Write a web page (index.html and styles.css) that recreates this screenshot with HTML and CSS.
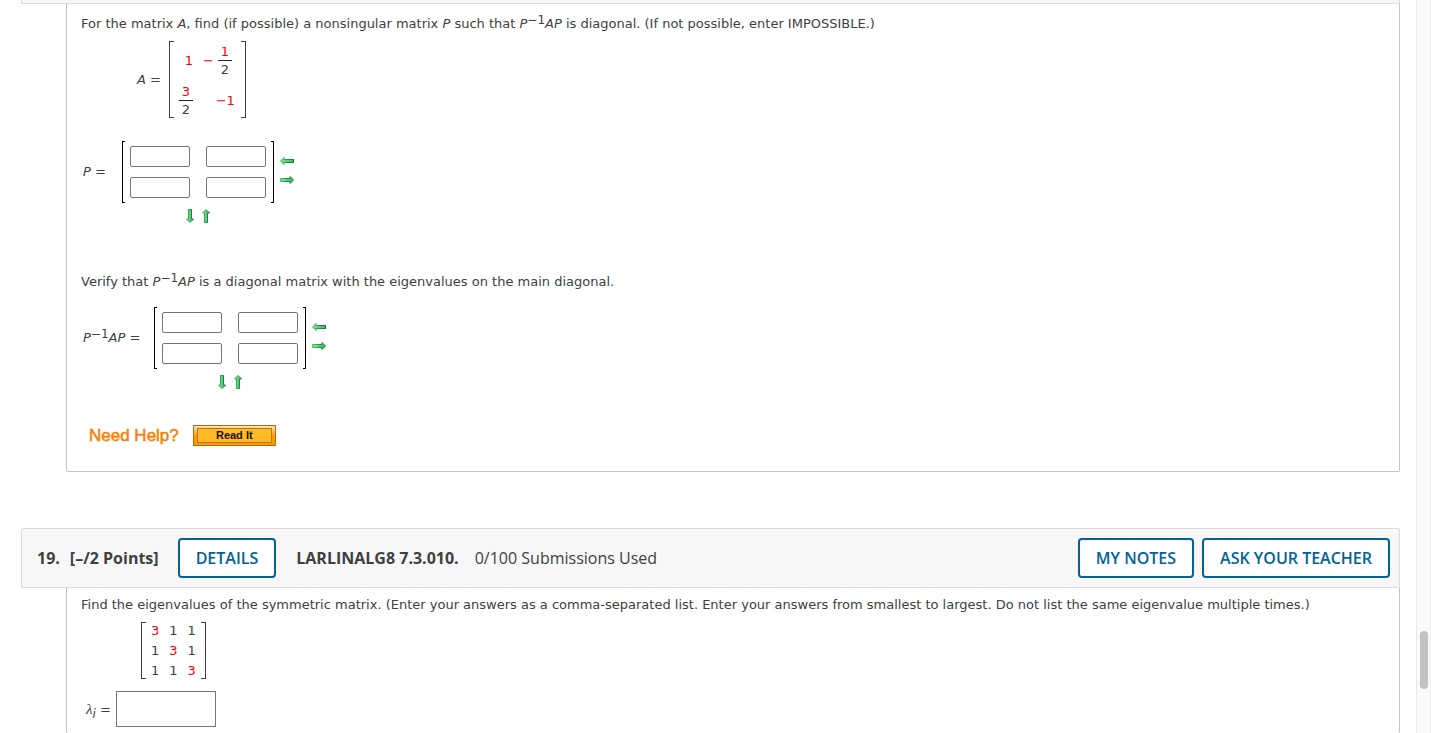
FILE: index.html
```
<!DOCTYPE html>
<html lang="en">
<head>
    <meta charset="UTF-8">
    <meta name="viewport" content="width=device-width, initial-scale=1.0">
    <title>Homework - Diagonalization</title>
    <link rel="stylesheet" href="styles.css">
</head>
<body>
    <!-- shared arrows, one for each direction -->
    <svg class="defs" width="0" height="0" aria-hidden="true">
        <defs>
            <linearGradient id="green" x1="0" y1="0" x2="1" y2="0">
                <stop offset="0" stop-color="#8fe295"/>
                <stop offset="1" stop-color="#3fb564"/>
            </linearGradient>
            <linearGradient id="edge" x1="0" y1="0" x2="1" y2="0">
                <stop offset="0" stop-color="#3fc468"/>
                <stop offset="1" stop-color="#00702c"/>
            </linearGradient>
            <symbol id="arrow-left" viewBox="0 0 14 8">
                <path d="M.5 4 4 .5V2.500H13.500V5.500H4V7.500Z" fill="url(#green)" stroke="url(#edge)"/>
            </symbol>
            <symbol id="arrow-right" viewBox="0 0 14 8">
                <path d="M13.500 4 10 .5V2.500H.5V5.500H10V7.500Z" fill="url(#green)" stroke="url(#edge)"/>
            </symbol>
            <symbol id="arrow-down" viewBox="0 0 8 14">
                <path d="M4 13.500.5 10H2.500V.5H5.500V10H7.500Z" fill="url(#green)" stroke="url(#edge)"/>
            </symbol>
            <symbol id="arrow-up" viewBox="0 0 8 14">
                <path d="M4 .5.5 4H2.500V13.500H5.500V4H7.500Z" fill="url(#green)" stroke="url(#edge)"/>
            </symbol>
        </defs>
    </svg>

    <main>
        <div class="prev-header"></div>
        <section class="question">
            <p>For the matrix <i>A</i>, find (if possible) a nonsingular matrix <i>P</i> such that <i>P</i><sup>−1</sup><i>AP</i> is diagonal. (If not possible, enter IMPOSSIBLE.)</p>

            <div class="equation given">
                <span><i>A</i> =</span>
                <div class="matrix">
                    <span class="bracket left"></span>
                    <div class="cells fractions">
                        <span class="red">1</span>
                        <span class="signed"><span class="red">−</span><span class="frac"><span class="red">1</span><span class="den">2</span></span></span>
                        <span class="frac"><span class="red">3</span><span class="den">2</span></span>
                        <span class="red">−1</span>
                    </div>
                    <span class="bracket right"></span>
                </div>
            </div>

            <div class="equation answer">
                <span class="label"><i>P</i> =</span>
                <div class="matrix-input">
                    <div class="matrix">
                        <span class="bracket left"></span>
                        <div class="cells inputs">
                            <input type="text" aria-label="P row 1 column 1">
                            <input type="text" aria-label="P row 1 column 2">
                            <input type="text" aria-label="P row 2 column 1">
                            <input type="text" aria-label="P row 2 column 2">
                        </div>
                        <span class="bracket right"></span>
                    </div>
                    <div class="column-arrows">
                        <button type="button" class="arrow" aria-label="Remove column"><svg width="14" height="8"><use href="#arrow-left"/></svg></button>
                        <button type="button" class="arrow" aria-label="Add column"><svg width="14" height="8"><use href="#arrow-right"/></svg></button>
                    </div>
                    <div class="row-arrows">
                        <button type="button" class="arrow" aria-label="Add row"><svg width="8" height="14"><use href="#arrow-down"/></svg></button>
                        <button type="button" class="arrow" aria-label="Remove row"><svg width="8" height="14"><use href="#arrow-up"/></svg></button>
                    </div>
                </div>
            </div>

            <p class="verify">Verify that <i>P</i><sup>−1</sup><i>AP</i> is a diagonal matrix with the eigenvalues on the main diagonal.</p>

            <div class="equation answer">
                <span class="label"><i>P</i><sup>−1</sup><i>AP</i> =</span>
                <div class="matrix-input">
                    <div class="matrix">
                        <span class="bracket left"></span>
                        <div class="cells inputs">
                            <input type="text" aria-label="Diagonal matrix row 1 column 1">
                            <input type="text" aria-label="Diagonal matrix row 1 column 2">
                            <input type="text" aria-label="Diagonal matrix row 2 column 1">
                            <input type="text" aria-label="Diagonal matrix row 2 column 2">
                        </div>
                        <span class="bracket right"></span>
                    </div>
                    <div class="column-arrows">
                        <button type="button" class="arrow" aria-label="Remove column"><svg width="14" height="8"><use href="#arrow-left"/></svg></button>
                        <button type="button" class="arrow" aria-label="Add column"><svg width="14" height="8"><use href="#arrow-right"/></svg></button>
                    </div>
                    <div class="row-arrows">
                        <button type="button" class="arrow" aria-label="Add row"><svg width="8" height="14"><use href="#arrow-down"/></svg></button>
                        <button type="button" class="arrow" aria-label="Remove row"><svg width="8" height="14"><use href="#arrow-up"/></svg></button>
                    </div>
                </div>
            </div>

            <div class="help">
                <span>Need Help?</span>
                <button type="button" class="read-it"><span>Read It</span></button>
            </div>
        </section>

        <header class="question-header">
            <span class="number">19.</span>
            <span class="points">[–/2 Points]</span>
            <button type="button" class="btn">DETAILS</button>
            <strong class="code">LARLINALG8 7.3.010.</strong>
            <span class="submissions">0/100 Submissions Used</span>
            <div class="actions">
                <button type="button" class="btn">MY NOTES</button>
                <button type="button" class="btn">ASK YOUR TEACHER</button>
            </div>
        </header>
        <section class="question last">
            <p>Find the eigenvalues of the symmetric matrix. (Enter your answers as a comma-separated list. Enter your answers from smallest to largest. Do not list the same eigenvalue multiple times.)</p>

            <div class="matrix symmetric">
                <span class="bracket left"></span>
                <div class="cells numbers">
                    <span class="red">3</span><span>1</span><span>1</span>
                    <span>1</span><span class="red">3</span><span>1</span>
                    <span>1</span><span>1</span><span class="red">3</span>
                </div>
                <span class="bracket right"></span>
            </div>

            <div class="lambda">
                <label for="lambda"><i class="symbol">λ</i><sub><i>i</i></sub> =</label>
                <input type="text" id="lambda">
            </div>
        </section>
    </main>

    <aside class="scroll-track">
        <div class="scroll-thumb"></div>
    </aside>
</body>
</html>
```
FILE: styles.css
```
* {
    box-sizing: border-box;
}

body {
    display: flex;
    min-height: 100vh;
    margin: 0;
    background: #fff;
    color: #404040;
    font-family: Verdana, "DejaVu Sans", sans-serif;
    font-size: 13px;
    line-height: 20px;
}

main {
    display: flex;
    flex: 1;
    flex-direction: column;
    min-width: 0;
    padding: 0 16px 0 21px;
}

p { margin: 0; }

sup,
sub {
    font-size: 12px;
    line-height: 0;
}
sup { vertical-align: 4px; }
sub { vertical-align: -4px; }

.defs { position: absolute; }
.red { color: #f00; }

.prev-header {
    height: 4px;
    background: #f7f7f7;
    border: 1px solid #dcdcdc;
    border-top: none;
}

.question {
    margin-left: 45px;
    padding: 10px 14px 25px;
    border: 1px solid #c4c4c4;
    border-top: none;
    border-radius: 0 0 2px 2px;
}

/* matrices */
.equation {
    display: flex;
}

.given {
    align-items: center;
    gap: 8px;
    margin: 7px 0 0 56px;
}

.matrix {
    display: flex;
    width: max-content;
}

.bracket {
    width: 5px;
    border: 1px solid #404040;
}
.bracket.left { border-right: none; }
.bracket.right { border-left: none; }

.cells {
    display: grid;
}

.fractions {
    grid-template-columns: auto auto;
    align-items: center;
    justify-items: end;
    gap: 5px 10px;
    padding: 2px 6px 0 5px;
    line-height: 17px;
}

.signed {
    display: flex;
    align-items: center;
    gap: 4px;
    padding-right: 3px;
}

.frac {
    display: flex;
    flex-direction: column;
    width: 14px;
    text-align: center;
}
.den { border-top: 1px solid #222; }

.answer {
    gap: 16px;
    margin: 23px 0 0 2px;
}
.label { padding-top: 21px; }
.answer .bracket {
    width: 3px;
    border-color: #000;
}

.matrix-input {
    display: grid;
    grid-template-columns: auto auto;
    gap: 6px;
}

.inputs {
    grid-template-columns: 60px 60px;
    gap: 10px 16px;
    padding: 5px;
}

input {
    border: 1px solid #767676;
    background: #fff;
    font: inherit;
}
.inputs input {
    width: 60px;
    height: 21px;
    border-radius: 2px;
}

.column-arrows {
    display: flex;
    flex-direction: column;
    justify-content: center;
    gap: 11px;
    padding-bottom: 4px;
}
.row-arrows {
    display: flex;
    justify-content: center;
    gap: 8px;
}

.arrow {
    padding: 0;
    border: none;
    background: none;
    cursor: pointer;
}
.arrow svg { display: block; }

.verify { margin-top: 49px; }
.verify + .answer {
    gap: 14px;
    margin-top: 15px;
}

/* help row */
.help {
    display: flex;
    align-items: center;
    gap: 14px;
    margin: 36px 0 0 8px;
    color: #f77f00;
    font-family: Arial, "Liberation Sans", sans-serif;
    font-size: 17px;
    -webkit-text-stroke: 0.5px #f77f00;
}

.read-it {
    width: 83px;
    padding: 2px 3px;
    border: 1px solid #b86a0b;
    background: linear-gradient(#ffe5bd, #ff9d0a 50%, #ff9500);
    color: #1a1200;
    font: bold 11px/13px Arial, "Liberation Sans", sans-serif;
    -webkit-text-stroke: 0;
    cursor: pointer;
}
.read-it span {
    display: block;
    border: 1px solid #b9770f;
    background: #ffba28;
}

/* question header */
.question-header {
    display: flex;
    align-items: center;
    margin-top: 56px;
    padding: 9px;
    border: 1px solid #dcdcdc;
    border-radius: 2px 2px 0 0;
    background: #f7f7f7;
    font-family: "Open Sans", sans-serif;
    font-size: 16px;
}

.number {
    padding: 0 10px 0 6px;
    font-weight: 700;
}
.points {
    margin-right: 19px;
    font-weight: 700;
}
.code { margin: 0 16px 0 20px; }

.btn {
    height: 40px;
    padding: 0 16px;
    border: 2px solid #006298;
    border-radius: 4px;
    background: #fff;
    color: #006298;
    font: 600 16px "Open Sans", sans-serif;
    cursor: pointer;
}
.btn:hover { background: #eef6fa; }

.actions {
    display: flex;
    gap: 8px;
    margin-left: auto;
}

/* question 19 */
.last {
    flex: 1;
    padding-top: 7px;
    padding-bottom: 0;
    border-bottom: none;
}

.symmetric { margin: 7px 0 0 60px; }

.numbers {
    grid-template-columns: repeat(3, auto);
    gap: 3px 10px;
    padding: 0 5px;
    line-height: 17px;
}

.lambda {
    display: flex;
    align-items: center;
    gap: 5px;
    margin: 12px 0 0 5px;
}
.symbol { font-family: "Times New Roman", "Liberation Serif", serif; font-size: 15px; }
.lambda input {
    width: 100px;
    height: 36px;
}

/* scrollbar */
.scroll-track {
    display: flex;
    flex-direction: column;
    width: 15px;
    padding: 0 2px 44px 3px;
    border: 1px solid #e8e8e8;
    border-width: 0 1px;
    background: #fafafa;
}
.scroll-thumb {
    height: 58px;
    margin-top: auto;
    border-radius: 4px;
    background: #c1c1c1;
}
```
